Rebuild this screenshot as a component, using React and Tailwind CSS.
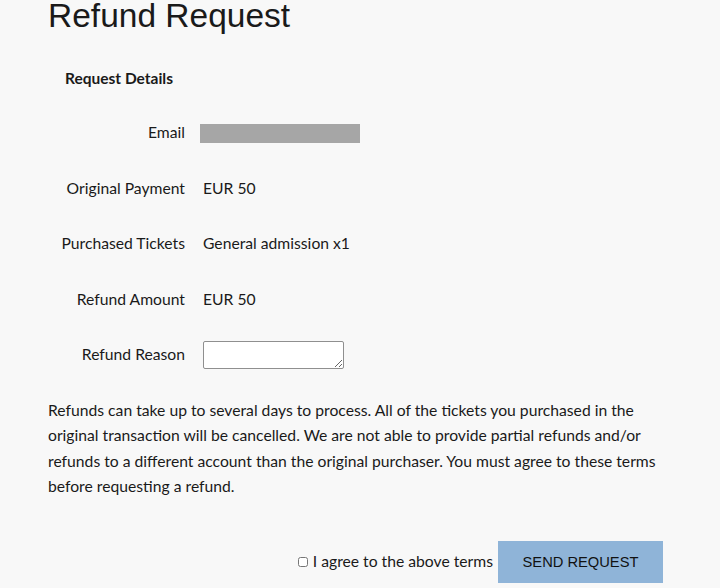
export default function App() {
    const rows = [
        { label: 'Original Payment', value: 'EUR 50' },
        { label: 'Purchased Tickets', value: 'General admission x1' },
        { label: 'Refund Amount', value: 'EUR 50' },
    ];

    return (
        <div className="min-h-[588px] bg-[#f8f8f8] text-[#1a1a1a] font-['Lato',sans-serif] overflow-hidden">
            <div className="w-[720px] px-[48px]">
                <h1 className="mt-[-4px] text-[33.5px] leading-[40px] font-['Liberation_Sans',Arial,sans-serif] font-normal">
                    Refund Request
                </h1>

                {/* Details */}
                <div className="mt-[31px] pl-[17px] text-[15.5px] leading-[22px] font-bold">Request Details</div>

                <div className="mt-[33px] grid grid-cols-[137px_1fr] auto-rows-[22px] gap-x-[15px] gap-y-[33.5px] items-center text-[15.7px]">
                    <span className="text-right">Email</span>
                    <div className="h-[19px] w-[160px] bg-[#a6a6a6]" />
                    {rows.map(r => (
                        <div key={r.label} className="contents">
                            <span className="text-right">{r.label}</span>
                            <span className="pl-[3px]">{r.value}</span>
                        </div>
                    ))}
                    <span className="text-right">Refund Reason</span>
                    <div className="pl-[3px]">
                        <textarea className="block h-[28px] w-[141px] bg-white border border-[#8f8f8f] rounded-[2px] resize-y" />
                    </div>
                </div>

                <p className="mt-[32px] text-[15.7px] leading-[25.4px]">
                    Refunds can take up to several days to process. All of the tickets you purchased in the
                    original transaction will be cancelled. We are not able to provide partial refunds and/or
                    refunds to a different account than the original purchaser. You must agree to these terms
                    before requesting a refund.
                </p>

                <div className="mt-[41px] flex items-center justify-end pr-[9px] gap-[5px]">
                    <label className="flex items-center gap-[5px] text-[15.7px]">
                        <input type="checkbox" className="w-[10px] h-[10px]" />
                        I agree to the above terms
                    </label>
                    <button className="h-[42px] w-[165px] bg-[#8fb4d8] text-[14.7px] font-['Liberation_Sans',Arial,sans-serif] text-[#111]">
                        SEND REQUEST
                    </button>
                </div>
            </div>
        </div>
    );
}
